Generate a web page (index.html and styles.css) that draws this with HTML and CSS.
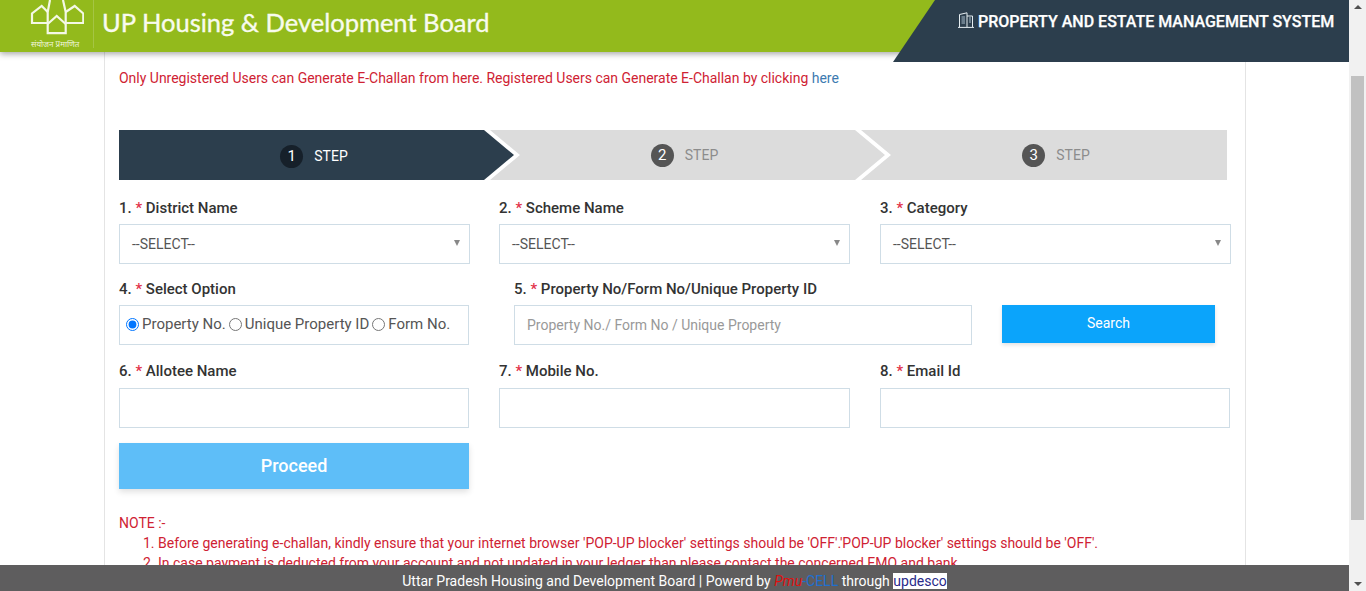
FILE: index.html
```html
<!DOCTYPE html>
<html lang="en">
<head>
<meta charset="utf-8">
<title>UP Housing &amp; Development Board</title>
<link rel="stylesheet" href="styles.css">
</head>
<body>
<div class="app">
  <div class="viewport">
    <header class="topbar">
      <div class="brand">
        <div class="logo">
          <svg class="logo-mark" viewBox="0 0 54 36" width="54" height="36" aria-hidden="true">
            <g fill="none" stroke="#f4f8e6" stroke-width="2.2" stroke-linejoin="miter">
              <path d="M17.7 12L11.7 6 2 13.5V23H17.7"/>
              <path d="M35.7 12L44.7 6 53.3 13.5V23H35.7"/>
              <path d="M20 0L17.7 12V33.2H35.7V12L33 0"/>
              <path d="M17.7 24L26.7 16 35.7 24"/>
            </g>
          </svg>
          <span class="logo-text">संयोजन प्रमाणित</span>
        </div>
        <h1 class="title">UP Housing &amp; Development Board</h1>
      </div>
      <div class="system">
        <svg class="system-icon" viewBox="0 0 16 16" width="16" height="16" aria-hidden="true">
          <path d="M1.5 15V2.5L9 .8V15M9 4h5.5v11M0 15.4h16" fill="none" stroke="#e6eef2" stroke-width="1"/>
          <path d="M3.5 5h3.5M3.5 7h3.5M3.5 9h3.5M3.5 11h3.5M11 6h2M11 8h2M11 10h2" stroke="#a9bdcc" stroke-width="1"/>
        </svg>
        <span>PROPERTY AND ESTATE MANAGEMENT SYSTEM</span>
      </div>
    </header>

    <main class="card">
      <p class="intro">Only Unregistered Users can Generate E-Challan from here. Registered Users can Generate E-Challan by clicking <a class="intro-link" href="#">here</a></p>

      <div class="steps">
        <div class="step step-active"><span class="step-num">1</span><span>STEP</span></div>
        <div class="step step-mid"><span class="step-num">2</span><span>STEP</span></div>
        <div class="step step-last"><span class="step-num">3</span><span>STEP</span></div>
      </div>

      <div class="row row-three row-first">
        <div class="field">
          <label class="label">1. <i>*</i> District Name</label>
          <div class="select select-first">--SELECT--</div>
        </div>
        <div class="field">
          <label class="label">2. <i>*</i> Scheme Name</label>
          <div class="select">--SELECT--</div>
        </div>
        <div class="field field-wide">
          <label class="label">3. <i>*</i> Category</label>
          <div class="select">--SELECT--</div>
        </div>
      </div>

      <div class="row row-option">
        <div class="field">
          <label class="label">4. <i>*</i> Select Option</label>
          <div class="radios">
            <label class="radio"><input type="radio" name="opt" checked>Property No.</label>
            <label class="radio"><input type="radio" name="opt">Unique Property ID</label>
            <label class="radio"><input type="radio" name="opt">Form No.</label>
          </div>
        </div>
        <div class="field">
          <label class="label">5. <i>*</i> Property No/Form No/Unique Property ID</label>
          <div class="box box-ph">Property No./ Form No / Unique Property</div>
        </div>
        <button class="search" type="button">Search</button>
      </div>

      <div class="row row-three row-third">
        <div class="field">
          <label class="label">6. <i>*</i> Allotee Name</label>
          <div class="box"></div>
        </div>
        <div class="field">
          <label class="label">7. <i>*</i> Mobile No.</label>
          <div class="box"></div>
        </div>
        <div class="field">
          <label class="label">8. <i>*</i> Email Id</label>
          <div class="box"></div>
        </div>
      </div>

      <button class="proceed" type="button">Proceed</button>

      <div class="note">
        <div>NOTE :-</div>
        <ol class="note-list">
          <li>Before generating e-challan, kindly ensure that your internet browser 'POP-UP blocker' settings should be 'OFF'.'POP-UP blocker' settings should be 'OFF'.</li>
          <li>In case payment is deducted from your account and not updated in your ledger than please contact the concerned EMO and bank.</li>
        </ol>
      </div>
    </main>

    <footer class="footer">Uttar Pradesh Housing and Development Board | Powerd by <em class="pmu">Pmu</em><span class="cell">-CELL</span> through <span class="updesco">updesco</span></footer>
  </div>

  <div class="scrollbar" aria-hidden="true">
    <span class="arrow arrow-up"></span>
    <span class="thumb"></span>
    <span class="arrow arrow-down"></span>
  </div>
</div>
</body>
</html>
```
FILE: styles.css
```css
* { box-sizing: border-box; }
html, body { margin: 0; height: 591px; overflow: hidden; background: #fff; }
body { font-family: Roboto, "Liberation Sans", sans-serif; font-size: 14px; color: #333; }
.app { display: flex; height: 591px; }
.viewport { position: relative; flex: 1; min-width: 0; height: 591px; overflow: hidden; }

.topbar { position: relative; height: 52px; z-index: 2; }
.brand {
  display: flex; align-items: stretch; height: 52px; background: #93ba1c;
  box-shadow: 0 2px 6px rgba(0,0,0,.35); padding-left: 30px;
}
.logo { width: 64px; height: 48px; border-right: 1px solid #a5c544; position: relative; }
.logo-mark { display: block; overflow: hidden; }
.logo-text {
  display: block; width: 60px; margin: 3px 0 0 1px; font-family: "Noto Sans", "DejaVu Sans", sans-serif;
  font-size: 8px; line-height: 9px; color: #f0f5dc; white-space: nowrap;
}
.title {
  margin: 0 0 0 8px; font-family: Lato, "Open Sans", sans-serif; font-weight: 400;
  font-size: 25.5px; line-height: 44px; color: #f8fbee; -webkit-text-stroke: .35px #f8fbee;
}
.system {
  position: absolute; top: 0; right: 0; width: 456px; height: 62px;
  background: #2c3e4d; clip-path: polygon(42px 0, 100% 0, 100% 100%, 0 100%);
  display: flex; align-items: flex-start; gap: 4px; padding: 12px 0 0 65px;
  color: #fff; font-weight: 500; font-size: 16px; line-height: 19px; white-space: nowrap;
  -webkit-text-stroke: .25px #fff;
}
.system-icon { flex: none; }

.card {
  width: 1142px; margin-left: 104px; height: 560px;
  border-left: 1px solid #e4e4e4; border-right: 1px solid #e4e4e4;
  padding: 17px 14px 0;
}
.intro { margin: 0; font-size: 14px; line-height: 18px; color: #cf2233; letter-spacing: -.01px; }
.intro-link { color: #3d7ab0; text-decoration: none; }

.steps { display: flex; width: 1108px; height: 50px; margin-top: 43px; }
.step {
  display: flex; align-items: center; justify-content: center; gap: 11px;
  height: 50px; font-size: 14px; color: #8c8c8c; background: #dcdcdc;
}
.step-active {
  width: 395px; background: #2c3e4d; color: #fff; position: relative; z-index: 1;
  clip-path: polygon(0 0, 365px 0, 395px 25px, 365px 50px, 0 50px);
  padding: 2px 5px 0 0;
}
.step-mid {
  width: 395px; margin-left: -24px; padding-right: 6px;
  clip-path: polygon(0 0, 365px 0, 395px 25px, 365px 50px, 0 50px, 30px 25px);
}
.step-last {
  flex: 1; margin-left: -24px; padding-left: 24px;
  clip-path: polygon(0 0, 100% 0, 100% 100%, 0 100%, 30px 25px);
}
.step-num {
  display: flex; align-items: center; justify-content: center;
  width: 23px; height: 23px; border-radius: 50%; background: #555; color: #fff; font-size: 15px;
}
.step-active .step-num { background: #16202a; }

.row { display: grid; }
.row-three { grid-template-columns: 350px 351px 351px; column-gap: 30px; }
.row-first { margin-top: 20px; }
.row-option { grid-template-columns: 350px 458px 213px; column-gap: 45px; margin-top: 17px; align-items: end; }
.row-option .search { margin-left: -15px; margin-bottom: 2px; }
.row-third { grid-template-columns: 350px 351px 350px; margin-top: 18px; }

.label { display: block; font-weight: 500; font-size: 15px; line-height: 16px; color: #333; margin-bottom: 8px; }
.label i { font-style: normal; color: #e2324a; }
.row-third .label { margin-bottom: 9px; }

.select, .box, .radios {
  display: flex; align-items: center; height: 40px; border: 1px solid #cfdde6; background: #fff;
}
.select {
  position: relative; padding-left: 12px; color: #555; font-size: 14px;
}
.select-first { margin-right: -1px; }
.select::after {
  content: ""; position: absolute; right: 9px; top: 15px;
  border-left: 3.5px solid transparent; border-right: 3.5px solid transparent; border-top: 6px solid #888;
}
.box-ph { padding-left: 12px; color: #999; font-size: 14px; }
.radios { padding: 0 0 2px 6px; gap: 3px; font-size: 15px; color: #555; }
.radio { display: flex; align-items: center; gap: 3px; }
.radio input { margin: 0; width: 13px; height: 13px; accent-color: #0075ff; }

.search {
  width: 213px; height: 38px; border: 0; padding: 0 0 2px; background: #0ba4fb; color: #fff;
  font-family: inherit; font-size: 14px; font-weight: 400;
  box-shadow: 0 2px 4px rgba(0,0,0,.12);
}
.proceed {
  display: block; width: 350px; height: 46px; margin-top: 15px; border: 0; padding: 0 0 2px;
  background: #5ebef8; color: #fff; font-family: inherit; font-size: 18px; font-weight: 500;
  box-shadow: 0 3px 6px rgba(0,0,0,.12);
}

.note { margin-top: 24px; color: #cf2233; font-size: 14px; line-height: 20px; }
.note-list { margin: 0; padding-left: 39px; }

.footer {
  position: absolute; left: 0; right: 0; bottom: 0; height: 26px; background: #5e5d5e;
  color: #fff; font-size: 14px; line-height: 32px; text-align: center; z-index: 3;
}
.pmu { color: #e01010; }
.cell { color: #1f6fd0; }
.updesco { background: #fff; color: #2a2a8a; }

.scrollbar {
  position: relative; flex: none; width: 17px; height: 591px; background: #f1f1f1;
}
.thumb { position: absolute; left: 2px; top: 76px; width: 13px; height: 444px; background: #c1c1c1; }
.arrow { position: absolute; left: 5px; border-left: 4px solid transparent; border-right: 4px solid transparent; }
.arrow-up { top: 5px; border-bottom: 4px solid #505050; }
.arrow-down { bottom: 5px; border-top: 4px solid #505050; }
```
